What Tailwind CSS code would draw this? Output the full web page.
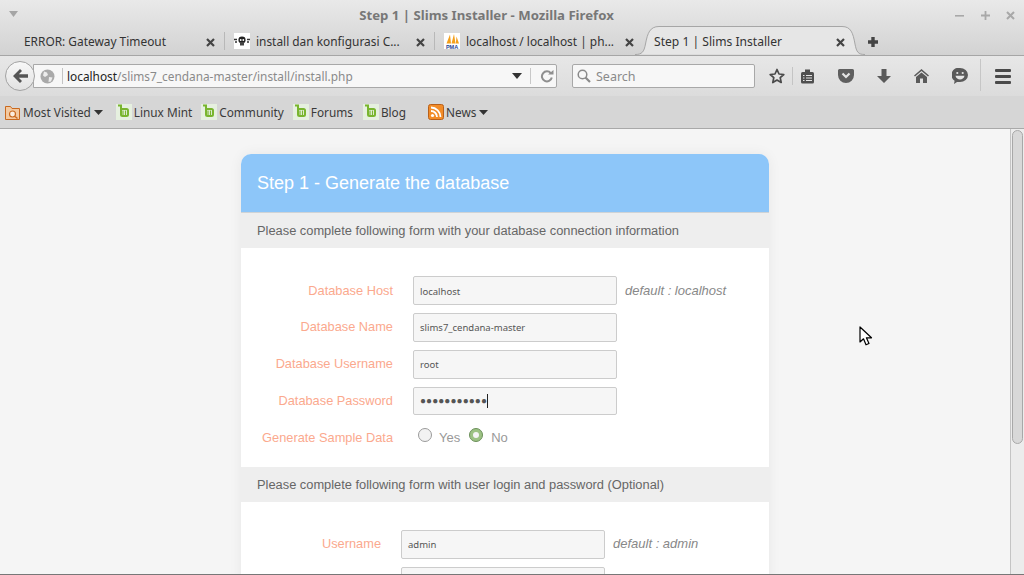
<!DOCTYPE html>
<html lang="en">
<head>
<meta charset="UTF-8" />
<title>Step 1 | Slims Installer - Mozilla Firefox</title>
<script src="https://cdn.jsdelivr.net/npm/@tailwindcss/browser@4"></script>
</head>
<body class="h-[575px] w-[1024px] overflow-hidden bg-[#f5f5f5] font-['Noto_Sans',sans-serif]">
<div class="relative flex h-[575px] flex-col border-b border-[#777]">

  <!-- window chrome -->
  <div class="h-[129px] shrink-0 border-b border-[#a9a9a9] bg-[#d6d6d6]">
    <div class="bg-gradient-to-b from-[#e9e9e9] to-[#d2d2d2]">
      <!-- title bar -->
      <div class="flex h-[27px] items-center pl-[9px] pr-[9px]">
        <svg width="9" height="6" viewBox="0 0 9 6"><path d="M0 0h9L4.500 6z" fill="#a5a5a5"/></svg>
        <div class="flex-1 pt-[5px] text-center text-[13.200px] font-bold leading-none text-[#777]">Step 1 | Slims Installer - Mozilla Firefox</div>
        <div class="flex w-[60px] items-center justify-between pt-[4px]">
          <svg width="9" height="9" viewBox="0 0 9 9"><path d="M0 4h9v1.600H0z" fill="#a8a8a8"/></svg>
          <svg width="9" height="9" viewBox="0 0 9 9"><path d="M3.600 0h1.800v3.600H9v1.800H5.400V9H3.600V5.400H0V3.600h3.600z" fill="#a8a8a8"/></svg>
          <svg width="9" height="9" viewBox="0 0 9 9"><path d="M1 1l7 7M8 1L1 8" stroke="#a8a8a8" stroke-width="2"/></svg>
        </div>
      </div>
      <!-- tabs -->
      <div class="flex h-[29px] items-stretch border-b border-[#a6a6a6] text-[11.900px] text-[#333]">
        <div class="my-[5px] flex w-[225px] items-center justify-between border-r border-[#b8b8b8] pl-[24px] pr-[9px]">
          <span class="pt-[2px]">ERROR: Gateway Timeout</span>
          <svg class="mt-[2px]" width="9" height="9" viewBox="0 0 9 9"><path d="M1 1l7 7M8 1L1 8" stroke="#444" stroke-width="2.200"/></svg>
        </div>
        <div class="my-[5px] flex w-[210px] items-center justify-between border-r border-[#b8b8b8] pl-[9px] pr-[9px]">
          <svg class="mr-[6px] shrink-0" width="16" height="16" viewBox="0 0 16 16"><rect width="16" height="16" fill="#fff"/><ellipse cx="8" cy="7" rx="3.600" ry="3.400" fill="#222"/><rect x="6" y="9" width="4" height="3.500" fill="#444"/><circle cx="6.700" cy="7" r=".9" fill="#fff"/><circle cx="9.300" cy="7" r=".9" fill="#fff"/><path d="M0 6.500h3M13 6.500h3M1 9h2M13 9h2" stroke="#333" stroke-width="1.400"/></svg>
          <span class="flex-1 whitespace-nowrap pt-[2px]">install dan konfigurasi C...</span>
          <svg class="mt-[2px]" width="9" height="9" viewBox="0 0 9 9"><path d="M1 1l7 7M8 1L1 8" stroke="#444" stroke-width="2.200"/></svg>
        </div>
        <div class="my-[5px] flex w-[205px] items-center pl-[9px] pr-[3px]">
          <svg class="mr-[6px] shrink-0" width="16" height="16" viewBox="0 0 16 16"><rect width="16" height="16" fill="#fff"/><path d="M2.500 10.500L6 1.500l1 9zM7.500 10.500L10 1l1.500 9.500zM11.800 10.500L12.500 3.500l2.500 7z" fill="#f4a01c"/><text x="8" y="15.500" text-anchor="middle" font-size="5.500" font-weight="700" fill="#1c3f94" font-family="Liberation Sans">PMA</text></svg>
          <span class="flex-1 whitespace-nowrap pt-[2px]">localhost / localhost | ph...</span>
          <svg class="mr-[3px] mt-[2px]" width="9" height="9" viewBox="0 0 9 9"><path d="M1 1l7 7M8 1L1 8" stroke="#444" stroke-width="2.200"/></svg>
        </div>
        <!-- selected tab -->
        <div class="relative -mb-[1px] -mt-[1px] flex w-[225px] items-center justify-between pl-[14px] pr-[20px]">
          <svg class="absolute left-[-5px] top-0" width="230" height="29" viewBox="0 0 230 29" preserveAspectRatio="none"><path d="M0 28.500C7 28.500 9 26 10.500 18C12.500 7 15 .5 24 .5H207C216 .5 218 7 220 18C221.500 26 223 28.500 230 28.500" fill="#e6e6e6" stroke="#a6a6a6"/></svg>
          <span class="relative pt-[2px] text-[12.100px]">Step 1 | Slims Installer</span>
          <svg class="relative mt-[3px]" width="9" height="9" viewBox="0 0 9 9"><path d="M1 1l7 7M8 1L1 8" stroke="#444" stroke-width="2.200"/></svg>
        </div>
        <div class="flex items-center pl-[3px] pt-[1px]">
          <svg width="10" height="10" viewBox="0 0 10 10"><path d="M3.300 0h3.400v3.300H10v3.400H6.700V10H3.300V6.700H0V3.300h3.300z" fill="#444"/></svg>
        </div>
      </div>
    </div>

    <!-- nav bar -->
    <div class="flex h-[40px] items-center bg-gradient-to-b from-[#e7e7e7] to-[#dcdcdc] pl-[5px]">
      <div class="relative z-10 flex h-[30px] w-[30px] shrink-0 items-center justify-center rounded-full border border-[#a3a3a3] bg-gradient-to-b from-[#f8f8f8] to-[#e2e2e2]">
        <svg width="15" height="14" viewBox="0 0 15 14"><path d="M7 0l2 2-3.200 3.200H15v3.600H5.800L9 12l-2 2-7-7z" fill="#555"/></svg>
      </div>
      <div class="-ml-[2px] flex h-[24px] w-[524px] shrink-0 items-center rounded-r-[2px] border border-[#a8a8a8] bg-[#f7f7f7] text-[11.850px]">
        <svg class="ml-[6px]" width="15" height="15" viewBox="0 0 15 15"><circle cx="7.500" cy="7.500" r="7" fill="#a9a9a9"/><path d="M4 2.500l3 1 1 2.500-3 2-2-1.500zM9 8l3.500.5-1.500 4-2.500.5z" fill="#ececec"/></svg>
        <div class="ml-[7px] mr-[4px] h-[16px] w-px bg-[#c4c4c4]"></div>
        <span class="pt-[2px] text-[#222]">localhost</span><span class="pt-[2px] text-[#8a8a8a]">/slims7_cendana-master/install/install.php</span>
        <div class="ml-auto flex items-center">
          <svg width="10" height="6" viewBox="0 0 10 6"><path d="M0 0h10L5 6z" fill="#333"/></svg>
          <div class="ml-[8px] h-[16px] w-px bg-[#c8c8c8]"></div>
          <svg class="ml-[9px] mr-[2px]" width="14" height="13" viewBox="0 0 14 13"><path d="M10.800 3.200A5 5 0 1 0 11.800 7.500" fill="none" stroke="#8f8f8f" stroke-width="2"/><path d="M8 4.500h5.500V0z" fill="#8f8f8f"/></svg>
        </div>
      </div>
      <div class="ml-[15px] flex h-[24px] w-[183px] shrink-0 items-center rounded-[2px] border border-[#a8a8a8] bg-[#f7f7f7] text-[12.500px] text-[#8a8a8a]">
        <svg class="ml-[4px] mr-[5px]" width="14" height="14" viewBox="0 0 14 14"><circle cx="5.500" cy="5.500" r="4.300" fill="none" stroke="#8a8a8a" stroke-width="1.500"/><path d="M8.500 8.500l4.500 4.500" stroke="#8a8a8a" stroke-width="2.200"/></svg>
        <span class="pt-[2px]">Search</span>
      </div>
      <svg class="ml-[14px]" width="16" height="16" viewBox="0 0 16 16"><path d="M8 1.500l2 4.500 4.800.5-3.600 3.200 1 4.800L8 12l-4.200 2.500 1-4.800L1.200 6.500 6 6z" fill="#e4e4e4" stroke="#4a4a4a" stroke-width="1.700" stroke-linejoin="round"/></svg>
      <div class="ml-[7px] h-[18px] w-px bg-[#c4c4c4]"></div>
      <svg class="ml-[7px]" width="15" height="15" viewBox="0 0 15 15"><rect x="1" y="3" width="13" height="11.500" rx="1.500" fill="#4f4f4f"/><rect x="5" y=".5" width="5" height="3.500" fill="#4f4f4f"/><path d="M3 6.500h1.500M3 9h1.500M3 11.500h1.500M6 6.500h6M6 9h6M6 11.500h6" stroke="#e4e4e4" stroke-width="1.200"/></svg>
      <svg class="ml-[23px]" width="16" height="14" viewBox="0 0 16 14"><path d="M1.500 0h13A1.500 1.500 0 0 1 16 1.500V6a8 8 0 0 1-16 0V1.500A1.500 1.500 0 0 1 1.500 0z" fill="#5f5f5f"/><path d="M4.500 4.500L8 8l3.500-3.500" fill="none" stroke="#e4e4e4" stroke-width="2.200"/></svg>
      <svg class="ml-[23px]" width="14" height="14" viewBox="0 0 14 14"><path d="M4.500 0h5v7H14l-7 7-7-7h4.500z" fill="#5a5a5a"/></svg>
      <svg class="ml-[23px]" width="15" height="14" viewBox="0 0 15 14"><path d="M7.500 0l7.500 6.500-1 1-6.500-5.600L1 7.500l-1-1z" fill="#5a5a5a"/><path d="M7.500 3.500L13 8v6H9V9.500H6V14H2V8z" fill="#5a5a5a"/></svg>
      <svg class="ml-[23px]" width="16" height="16" viewBox="0 0 16 16"><path d="M8 0a8 7 0 0 1 0 14H5l-3 2 .6-3.300A7 7 0 0 1 8 0z" fill="#5a5a5a"/><circle cx="5.300" cy="5" r="1.100" fill="#e4e4e4"/><circle cx="10.700" cy="5" r="1.100" fill="#e4e4e4"/><path d="M3.500 7.800h9C12 10.500 10 11.500 8 11.500S4 10.500 3.500 7.800z" fill="#e4e4e4"/></svg>
      <div class="ml-[12px] mt-[3px] h-[32px] w-px self-start bg-[#c6c6c6]"></div>
      <div class="ml-[14px] flex w-[16px] flex-col gap-[3px]">
        <div class="h-[3px] rounded-[1px] bg-[#4a4a4a]"></div>
        <div class="h-[3px] rounded-[1px] bg-[#4a4a4a]"></div>
        <div class="h-[3px] rounded-[1px] bg-[#4a4a4a]"></div>
      </div>
    </div>

    <!-- bookmarks -->
    <div class="flex h-[32px] items-center pl-[5px] text-[11.800px] text-[#3a3a3a]">
      <svg width="15" height="16" viewBox="0 0 15 16"><path d="M.5 2.500h5l1.500 2h7.500v11H.5z" fill="#f3c9a0" stroke="#c9691e"/><circle cx="7.500" cy="10" r="3" fill="#fbeee0" stroke="#c9691e" stroke-width="1.200"/><path d="M10 12.500l2.500 2" stroke="#c9691e" stroke-width="1.500"/></svg>
      <span class="ml-[3px] pt-[2px]">Most Visited</span>
      <svg class="ml-[3px] mr-[13px]" width="9" height="5" viewBox="0 0 9 5"><path d="M0 0h9L4.500 5z" fill="#333"/></svg>
      <svg width="16" height="16" viewBox="0 0 16 16"><use href="#mint"/></svg>
      <span class="ml-[2px] pt-[2px]">Linux Mint</span>
      <svg class="ml-[9px]" width="16" height="16" viewBox="0 0 16 16"><use href="#mint"/></svg>
      <span class="ml-[2px] pt-[2px]">Community</span>
      <svg class="ml-[9px]" width="16" height="16" viewBox="0 0 16 16"><use href="#mint"/></svg>
      <span class="ml-[2px] pt-[2px]">Forums</span>
      <svg class="ml-[10px]" width="16" height="16" viewBox="0 0 16 16"><use href="#mint"/></svg>
      <span class="ml-[2px] pt-[2px]">Blog</span>
      <svg class="ml-[22px]" width="16" height="16" viewBox="0 0 16 16"><rect x=".5" y=".5" width="15" height="15" rx="2" fill="#f28c28" stroke="#b9601a"/><circle cx="4.500" cy="11.500" r="1.600" fill="#fff"/><path d="M3 7a6 6 0 0 1 6 6M3 3.500A9.500 9.500 0 0 1 12.500 13" fill="none" stroke="#fff" stroke-width="1.800"/></svg>
      <span class="ml-[2px] pt-[2px]">News</span>
      <svg class="ml-[3px]" width="9" height="5" viewBox="0 0 9 5"><path d="M0 0h9L4.500 5z" fill="#333"/></svg>
    </div>
  </div>

  <svg class="hidden"><defs><g id="mint"><rect width="16" height="16" fill="#e6f0df"/><path d="M2 1.500h3v9a1.500 1.500 0 0 0 1.500 1.500h4a1.500 1.500 0 0 0 1.500-1.500V6.500A1.500 1.500 0 0 0 10.500 5H6" fill="none" stroke="#79b52e" stroke-width="2"/><path d="M7 11V6.500M9.500 11V6.500" stroke="#79b52e" stroke-width="1.200"/></g></defs></svg>

  <!-- page area -->
  <div class="flex min-h-0 flex-1">
    <div class="flex min-w-0 flex-1 justify-center overflow-hidden pt-[25px] font-['Liberation_Sans',sans-serif]">
      <div class="h-[600px] w-[528px] shrink-0 rounded-t-[10px] bg-white shadow-[0_0_14px_rgba(0,0,0,0.06)]">
        <div class="flex h-[59px] items-center rounded-t-[10px] border-b border-[#cfd3d6] bg-[#8dc6f9] pl-[16px] text-[18px] text-white">Step 1 - Generate the database</div>
        <div class="flex h-[35px] items-center bg-[#eeeeee] pl-[16px] text-[12.850px] text-[#666]">Please complete following form with your database connection information</div>

        <div class="flex flex-col gap-[8px] pt-[28px]">
          <div class="flex h-[29px] items-center">
            <label class="w-[152px] text-right text-[12.800px] text-[#fba98e]">Database Host</label>
            <div class="ml-[20px] flex h-[29px] w-[204px] items-center rounded-[2px] border border-[#ccc] bg-[#f6f6f6] pl-[6px] pt-[3px] font-['Noto_Sans',sans-serif] text-[9.500px] text-[#555]">localhost</div>
            <span class="ml-[8px] text-[13px] italic text-[#888]">default : localhost</span>
          </div>
          <div class="flex h-[29px] items-center">
            <label class="mb-[2px] w-[152px] text-right text-[12.800px] text-[#fba98e]">Database Name</label>
            <div class="ml-[20px] flex h-[29px] w-[204px] items-center rounded-[2px] border border-[#ccc] bg-[#f6f6f6] pl-[6px] pt-[1px] font-['Noto_Sans',sans-serif] text-[9.500px] text-[#555]">slims7_cendana-master</div>
          </div>
          <div class="flex h-[29px] items-center">
            <label class="mb-[2px] w-[152px] text-right text-[12.800px] text-[#fba98e]">Database Username</label>
            <div class="ml-[20px] flex h-[29px] w-[204px] items-center rounded-[2px] border border-[#ccc] bg-[#f6f6f6] pl-[6px] pt-[1px] font-['Noto_Sans',sans-serif] text-[9.500px] text-[#555]">root</div>
          </div>
          <div class="flex h-[28px] items-center">
            <label class="w-[152px] text-right text-[12.800px] text-[#fba98e]">Database Password</label>
            <div class="ml-[20px] flex h-[28px] w-[204px] items-center rounded-[2px] border border-[#ccc] bg-[#f6f6f6] pl-[6px]">
              <span class="text-[10px] leading-none tracking-[0.05px] text-[#555]">●●●●●●●●●●●</span>
              <span class="h-[14px] w-px bg-[#222]"></span>
            </div>
          </div>
          <div class="flex h-[30px] items-center">
            <label class="w-[152px] text-right text-[12.800px] text-[#fba98e]">Generate Sample Data</label>
            <div class="ml-[25px] flex items-center text-[13px] text-[#999]">
              <span class="-mt-[6px] h-[14px] w-[14px] rounded-full border border-[#9a9a9a] bg-[#f2f2f2]"></span>
              <span class="ml-[7px]">Yes</span>
              <span class="-mt-[6px] ml-[9px] flex h-[14px] w-[14px] items-center justify-center rounded-full border border-[#6b8f5a] bg-[#9cc283]"><span class="h-[6px] w-[6px] rounded-full bg-[#f4f4f4]"></span></span>
              <span class="ml-[8px]">No</span>
            </div>
          </div>
        </div>

        <div class="mt-[14px] flex h-[35px] items-center bg-[#eeeeee] pl-[16px] text-[12.850px] text-[#666]">Please complete following form with user login and password (Optional)</div>

        <div class="flex flex-col gap-[8px] pt-[28px]">
          <div class="flex h-[29px] items-center">
            <label class="mb-[2px] w-[140px] text-right text-[12.800px] text-[#fba98e]">Username</label>
            <div class="ml-[20px] flex h-[29px] w-[204px] items-center rounded-[2px] border border-[#ccc] bg-[#f6f6f6] pl-[6px] pt-[1px] font-['Noto_Sans',sans-serif] text-[9.500px] text-[#555]">admin</div>
            <span class="mb-[2px] ml-[8px] text-[13px] italic text-[#888]">default : admin</span>
          </div>
          <div class="flex h-[29px] items-center">
            <div class="ml-[160px] h-[29px] w-[204px] rounded-[2px] border border-[#ccc] bg-[#f6f6f6]"></div>
          </div>
        </div>
      </div>
    </div>
    <!-- scrollbar -->
    <div class="w-[14px] shrink-0 border-l border-[#c4c4c4] bg-[#ececec] pl-px pr-[1px] pt-px">
      <div class="h-[314px] rounded-[6px] border border-[#a8a8a8] bg-[#d8d8d8]"></div>
    </div>
  </div>

  <!-- mouse pointer -->
  <svg class="absolute left-[859px] top-[326px]" width="14" height="21" viewBox="0 0 14 21"><path d="M1 1v15l3.500-3.200 2.500 6 3-1.300-2.600-5.700H12.500z" fill="#fff" stroke="#000" stroke-width="1.200" stroke-linejoin="round"/></svg>
</div>
</body>
</html>
